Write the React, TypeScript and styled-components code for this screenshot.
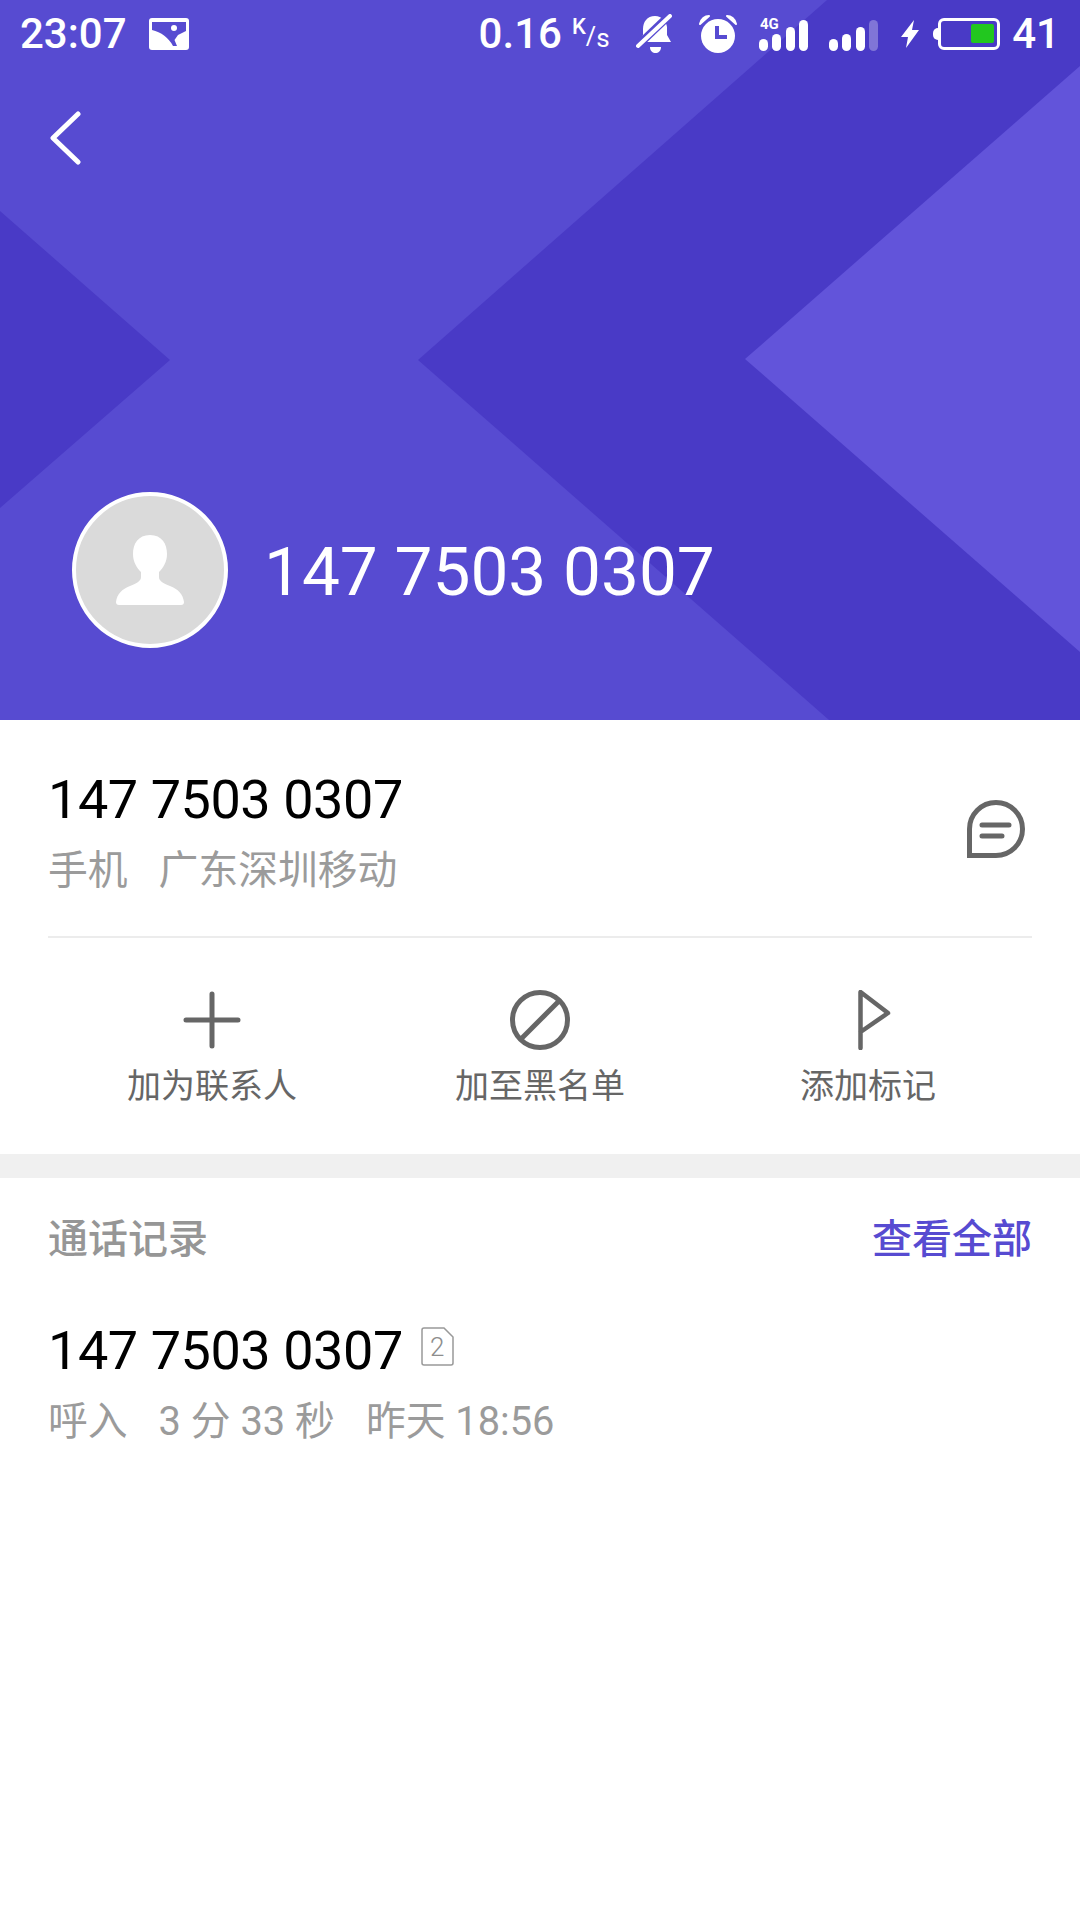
import React from 'react';
import styled, { createGlobalStyle } from 'styled-components';

const BASE = '#574bd1';
const DARK = '#493ac6';
const LIGHT = '#6254da';
const ICON = '#666666';

const GlobalStyle = createGlobalStyle`
  html, body {
    margin: 0;
    padding: 0;
    background: #ffffff;
  }
  body {
    font-family: Roboto, "Noto Sans CJK SC", sans-serif;
  }
`;

const Page = styled.div`
  width: 1080px;
  height: 1920px;
  background: #ffffff;
  overflow: hidden;
`;

const Header = styled.header`
  position: relative;
  height: 720px;
  display: flex;
  flex-direction: column;
  background: ${BASE};
  color: #ffffff;
`;

const Backdrop = styled.svg`
  position: absolute;
  inset: 0;
`;

const StatusBar = styled.div`
  position: relative;
  height: 68px;
  padding: 0 20px 0 20px;
  display: flex;
  align-items: center;
  justify-content: space-between;
`;

const StatusGroup = styled.div`
  display: flex;
  align-items: center;
`;

const StatusText = styled.span`
  font-size: 42px;
  font-weight: 500;
  line-height: 68px;
`;

const StatusIcon = styled.svg<{ $gap: number }>`
  display: block;
  margin-left: ${(p) => p.$gap}px;
`;

const Speed = styled.span`
  display: inline-flex;
  width: 37px;
  height: 34px;
  margin-left: 10px;
  margin-top: -3px;
  font-weight: 500;
  line-height: 1;
`;

const SpeedUnit = styled.span`
  font-size: 22px;
  align-self: flex-start;
`;

const SpeedSlash = styled.span`
  font-size: 25px;
  font-weight: 400;
  align-self: center;
  margin-top: 8px;
`;

const SpeedBase = styled.span`
  font-size: 26px;
  font-weight: 400;
  align-self: flex-end;
  margin-bottom: -1px;
`;

const SignalBox = styled.div<{ $gap: number }>`
  position: relative;
  display: flex;
  align-items: flex-end;
  gap: 4.4px;
  height: 32px;
  margin-top: 1px;
  margin-left: ${(p) => p.$gap}px;
`;

const SignalBar = styled.span<{ $height: number; $dim?: boolean }>`
  width: 9px;
  height: ${(p) => p.$height}px;
  border-radius: 5px;
  background: #ffffff;
  opacity: ${(p) => (p.$dim ? 0.3 : 1)};
`;

const NetworkTag = styled.span`
  position: absolute;
  left: 1px;
  top: -2px;
  font-size: 15px;
  font-weight: 700;
  line-height: 15px;
`;

const BatteryNub = styled.span`
  width: 5px;
  height: 12px;
  margin-left: 13px;
  border-radius: 5px 0 0 5px;
  background: #ffffff;
`;

const BatteryBody = styled.div`
  box-sizing: border-box;
  width: 62px;
  height: 32px;
  margin-right: 12px;
  padding: 3px 3px 3px 0;
  border: 3px solid #ffffff;
  border-radius: 6px;
  display: flex;
  justify-content: flex-end;
`;

const BatteryFill = styled.span`
  width: 23px;
  margin: 0 0 1px;
  border-radius: 2px;
  background: #22c71f;
`;

const BackButton = styled.svg`
  position: relative;
  display: block;
  margin: 43px 0 0 48px;
`;

const Identity = styled.div`
  position: relative;
  margin-top: auto;
  padding: 0 0 72px 72px;
  display: flex;
  align-items: center;
`;

const Avatar = styled.div`
  box-sizing: border-box;
  width: 156px;
  height: 156px;
  border: 4px solid #ffffff;
  border-radius: 50%;
  background: #dadada;
  display: flex;
  align-items: center;
  justify-content: center;
`;

const HeroNumber = styled.h1`
  margin: 4px 0 0 36px;
  font-size: 67.5px;
  font-weight: 400;
  line-height: 80px;
  white-space: nowrap;
`;

const NumberRow = styled.section`
  box-sizing: border-box;
  height: 218px;
  margin: 0 48px;
  padding-top: 48px;
  border-bottom: 2px solid #ececec;
  display: flex;
  justify-content: space-between;
`;

const PhoneNumber = styled.div`
  font-size: 54px;
  line-height: 64px;
  letter-spacing: -0.45px;
  color: #000000;
`;

const Details = styled.div`
  margin-top: 11px;
  display: flex;
  gap: 31px;
  font-size: 39.8px;
  line-height: 56px;
  color: #9b9b9b;
`;

const MessageIcon = styled.svg`
  display: block;
  margin: 32px 7px 0 0;
`;

const Actions = styled.section`
  height: 216px;
  margin: 0 48px;
  padding-top: 52px;
  box-sizing: border-box;
  display: grid;
  grid-template-columns: repeat(3, 1fr);
`;

const Action = styled.div`
  display: flex;
  flex-direction: column;
  align-items: center;
`;

const ActionLabel = styled.span`
  margin-top: 13px;
  font-size: 34px;
  line-height: 46px;
  color: ${ICON};
`;

const Band = styled.div`
  height: 24px;
  background: #f0f0f0;
`;

const RecordsHeader = styled.div`
  margin: 35px 48px 0;
  display: flex;
  justify-content: space-between;
  font-size: 40px;
  line-height: 54px;
`;

const RecordsTitle = styled.span`
  color: #969696;
  font-weight: 500;
`;

const RecordsLink = styled.span`
  color: ${BASE};
  font-weight: 500;
`;

const CallEntry = styled.div`
  margin: 52px 48px 0;
`;

const CallLine = styled.div`
  display: flex;
  align-items: center;
`;

const SimBadge = styled.span`
  position: relative;
  width: 33px;
  height: 39px;
  margin: -9px 0 0 18px;
  display: flex;
  align-items: center;
  justify-content: center;
  font-size: 26px;
  font-weight: 300;
  color: #8d8d8d;
`;

const SimOutline = styled.svg`
  position: absolute;
  inset: 0;
`;

const Signal = ({ gap, heights, dimLast, tag }: { gap: number; heights: number[]; dimLast?: boolean; tag?: string }) => (
  <SignalBox $gap={gap}>
    {tag && <NetworkTag>{tag}</NetworkTag>}
    {heights.map((h, i) => (
      <SignalBar key={i} $height={h} $dim={dimLast && i === heights.length - 1} />
    ))}
  </SignalBox>
);

export default function App() {
  return (
    <Page>
      <GlobalStyle />
      <Header>
        <Backdrop width="1080" height="720" viewBox="0 0 1080 720">
          <polygon points="0,211 170,360 0,508" fill={DARK} />
          <polygon points="418,360 827,0 1080,0 1080,720 829,720" fill={DARK} />
          <polygon points="745,359 1080,66 1080,652" fill={LIGHT} />
        </Backdrop>

        <StatusBar>
          <StatusGroup>
            <StatusText>23:07</StatusText>
            <StatusIcon $gap={22} width="40" height="32" viewBox="0 0 40 32">
              <rect width="40" height="32" rx="3" fill="#fff" />
              <path d="M3 4H37V13L29 17 25.5 22 28 28H24C20 20 12 14 3 12Z" fill={BASE} />
              <circle cx="25" cy="10" r="3" fill="#fff" />
            </StatusIcon>
          </StatusGroup>
          <StatusGroup>
            <StatusText>0.16</StatusText>
            <Speed>
              <SpeedUnit>K</SpeedUnit>
              <SpeedSlash>/</SpeedSlash>
              <SpeedBase>s</SpeedBase>
            </Speed>
            <StatusIcon $gap={27} width="38" height="40" viewBox="0 0 38 40">
              <path d="M19 2C11 2 7 8 7 15V21L3 28H35L31 21V13C30 7 26 2 19 2Z" fill="#fff" />
              <path d="M14 33H25C25 41 14 41 14 33Z" fill="#fff" />
              <path d="M-3 36 38 -3" stroke={BASE} strokeWidth="8" />
              <path d="M2 32 34 2" stroke="#fff" strokeWidth="4" strokeLinecap="round" />
            </StatusIcon>
            <StatusIcon $gap={25} width="38" height="38" viewBox="0 0 38 38">
              <circle cx="19" cy="21" r="17" fill="#fff" />
              <path d="M1 9C2 4 6 1 10 1L1 9ZM37 9C36 4 32 1 28 1L37 9Z" fill="#fff" stroke="#fff" strokeWidth="2" strokeLinejoin="round" />
              <path d="M18 11V22H28" fill="none" stroke={BASE} strokeWidth="4" />
            </StatusIcon>
            <Signal gap={22} tag="4G" heights={[12, 17, 24, 31]} />
            <Signal gap={21} heights={[12, 17, 24, 31]} dimLast />
            <StatusIcon $gap={22} width="20" height="28" viewBox="0 0 20 28">
              <path d="M14 0 1 17H8L6 28 19 10H12Z" fill="#fff" />
            </StatusIcon>
            <BatteryNub />
            <BatteryBody>
              <BatteryFill />
            </BatteryBody>
            <StatusText>41</StatusText>
          </StatusGroup>
        </StatusBar>

        <BackButton width="36" height="54" viewBox="0 0 36 54">
          <path d="M30 3 5 27 30 51" fill="none" stroke="#fff" strokeWidth="5" strokeLinecap="round" strokeLinejoin="round" />
        </BackButton>

        <Identity>
          <Avatar>
            <svg width="68" height="72" viewBox="0 0 68 72">
              <path
                d="M34 1C22 1 17 10 17 20C17 28 21 34 25 38V43C25 47 21 49 14 52C6 55 1 60 0 68C0 70 1 71 3 71H65C67 71 68 70 68 68C67 60 62 55 54 52C47 49 43 47 43 43V38C47 34 51 28 51 20C51 10 46 1 34 1Z"
                fill="#fff"
              />
            </svg>
          </Avatar>
          <HeroNumber>147 7503 0307</HeroNumber>
        </Identity>
      </Header>

      <NumberRow>
        <div>
          <PhoneNumber>147 7503 0307</PhoneNumber>
          <Details>
            <span>手机</span>
            <span>广东深圳移动</span>
          </Details>
        </div>
        <MessageIcon width="58" height="58" viewBox="0 0 58 58">
          <path d="M2.5 55.5V29A26.5 26.5 0 1 1 29 55.5Z" fill="none" stroke={ICON} strokeWidth="5" />
          <path d="M15 25H42M15 36H35" fill="none" stroke={ICON} strokeWidth="5" strokeLinecap="round" />
        </MessageIcon>
      </NumberRow>

      <Actions>
        <Action>
          <svg width="60" height="60" viewBox="0 0 60 60">
            <path d="M30 4V56M4 30H56" fill="none" stroke={ICON} strokeWidth="5" strokeLinecap="round" />
          </svg>
          <ActionLabel>加为联系人</ActionLabel>
        </Action>
        <Action>
          <svg width="60" height="60" viewBox="0 0 60 60">
            <circle cx="30" cy="30" r="27.5" fill="none" stroke={ICON} strokeWidth="5" />
            <path d="M11 49 49 11" fill="none" stroke={ICON} strokeWidth="5" />
          </svg>
          <ActionLabel>加至黑名单</ActionLabel>
        </Action>
        <Action>
          <svg width="60" height="60" viewBox="0 0 60 60">
            <path d="M22.5 42 50 23 22.5 2V58" fill="none" stroke={ICON} strokeWidth="4.5" strokeLinecap="round" strokeLinejoin="round" />
          </svg>
          <ActionLabel>添加标记</ActionLabel>
        </Action>
      </Actions>

      <Band />

      <RecordsHeader>
        <RecordsTitle>通话记录</RecordsTitle>
        <RecordsLink>查看全部</RecordsLink>
      </RecordsHeader>

      <CallEntry>
        <CallLine>
          <PhoneNumber>147 7503 0307</PhoneNumber>
          <SimBadge>
            <SimOutline width="33" height="39" viewBox="0 0 33 39">
              <path d="M3 1H23L32 10V36C32 37 31 38 30 38H3C2 38 1 37 1 36V3C1 2 2 1 3 1Z" fill="none" stroke="#999" strokeWidth="1.5" />
            </SimOutline>
            2
          </SimBadge>
        </CallLine>
        <Details>
          <span>呼入</span>
          <span>3 分 33 秒</span>
          <span>昨天 18:56</span>
        </Details>
      </CallEntry>
    </Page>
  );
}
